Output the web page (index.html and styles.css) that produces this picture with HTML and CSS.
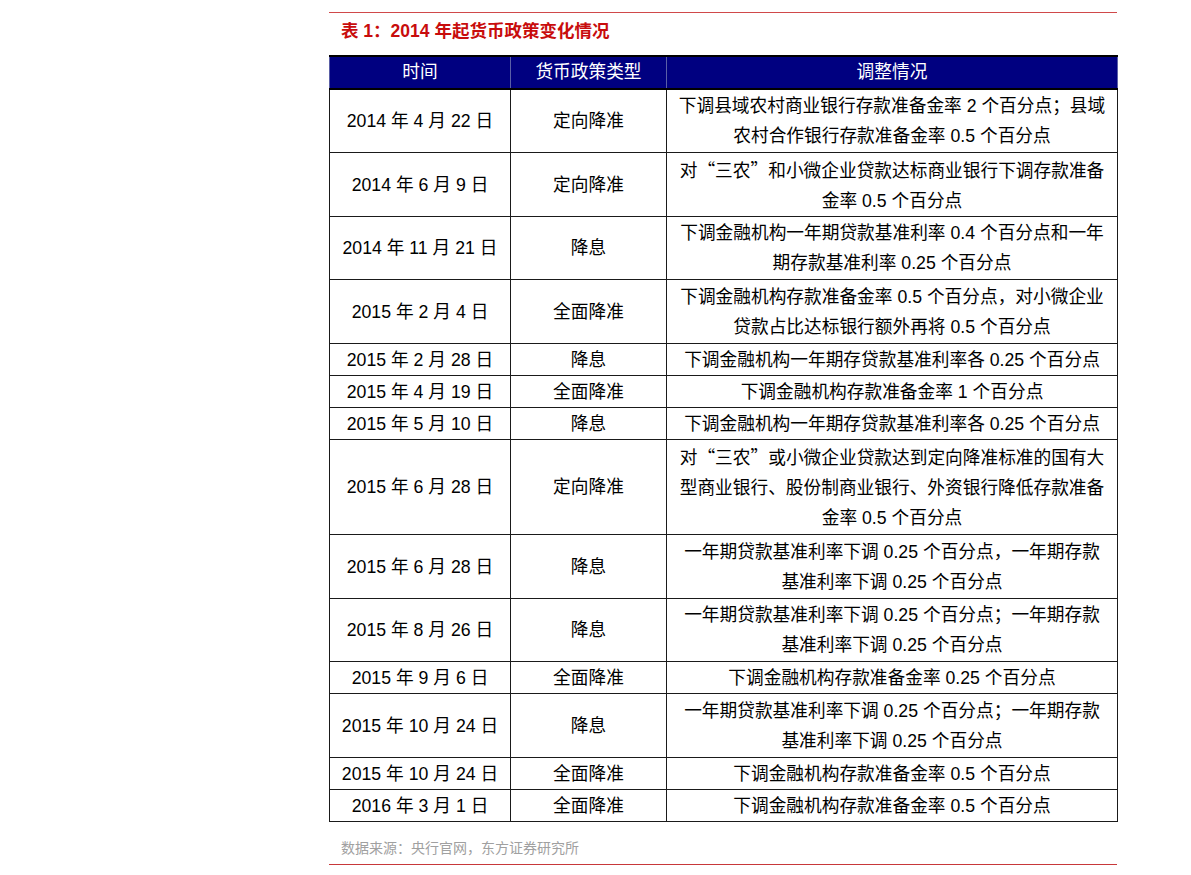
FILE: index.html
```html
<!DOCTYPE html>
<html lang="zh">
<head>
<meta charset="utf-8">
<link rel="stylesheet" href="styles.css">
</head>
<body>
<div class="page">
  <div class="rule-top"></div>
  <h1 class="title">表 1：2014 年起货币政策变化情况</h1>
  <table class="policy">
    <colgroup>
      <col class="c1"><col class="c2"><col class="c3">
    </colgroup>
    <thead>
      <tr><th>时间</th><th>货币政策类型</th><th>调整情况</th></tr>
    </thead>
    <tbody>
      <tr class="h2"><td>2014 年 4 月 22 日</td><td>定向降准</td><td>下调县域农村商业银行存款准备金率 2 个百分点；县域<br>农村合作银行存款准备金率 0.5 个百分点</td></tr>
      <tr class="h2b"><td>2014 年 6 月 9 日</td><td>定向降准</td><td>对<span class="q">“</span>三农<span class="q">”</span>和小微企业贷款达标商业银行下调存款准备<br>金率 0.5 个百分点</td></tr>
      <tr class="h2"><td>2014 年 11 月 21 日</td><td>降息</td><td>下调金融机构一年期贷款基准利率 0.4 个百分点和一年<br>期存款基准利率 0.25 个百分点</td></tr>
      <tr class="h2b"><td>2015 年 2 月 4 日</td><td>全面降准</td><td>下调金融机构存款准备金率 0.5 个百分点，对小微企业<br>贷款占比达标银行额外再将 0.5 个百分点</td></tr>
      <tr><td>2015 年 2 月 28 日</td><td>降息</td><td>下调金融机构一年期存贷款基准利率各 0.25 个百分点</td></tr>
      <tr><td>2015 年 4 月 19 日</td><td>全面降准</td><td>下调金融机构存款准备金率 1 个百分点</td></tr>
      <tr><td>2015 年 5 月 10 日</td><td>降息</td><td>下调金融机构一年期存贷款基准利率各 0.25 个百分点</td></tr>
      <tr class="h3"><td>2015 年 6 月 28 日</td><td>定向降准</td><td>对<span class="q">“</span>三农<span class="q">”</span>或小微企业贷款达到定向降准标准的国有大<br>型商业银行、股份制商业银行、外资银行降低存款准备<br>金率 0.5 个百分点</td></tr>
      <tr class="h2b"><td>2015 年 6 月 28 日</td><td>降息</td><td>一年期贷款基准利率下调 0.25 个百分点，一年期存款<br>基准利率下调 0.25 个百分点</td></tr>
      <tr class="h2"><td>2015 年 8 月 26 日</td><td>降息</td><td>一年期贷款基准利率下调 0.25 个百分点；一年期存款<br>基准利率下调 0.25 个百分点</td></tr>
      <tr><td>2015 年 9 月 6 日</td><td>全面降准</td><td>下调金融机构存款准备金率 0.25 个百分点</td></tr>
      <tr class="h2b"><td>2015 年 10 月 24 日</td><td>降息</td><td>一年期贷款基准利率下调 0.25 个百分点；一年期存款<br>基准利率下调 0.25 个百分点</td></tr>
      <tr><td>2015 年 10 月 24 日</td><td>全面降准</td><td>下调金融机构存款准备金率 0.5 个百分点</td></tr>
      <tr><td>2016 年 3 月 1 日</td><td>全面降准</td><td>下调金融机构存款准备金率 0.5 个百分点</td></tr>
    </tbody>
  </table>
  <p class="source">数据来源：央行官网，东方证券研究所</p>
  <div class="rule-bottom"></div>
</div>
</body>
</html>
```

FILE: styles.css
```css
html, body {
  margin: 0;
  padding: 0;
  background: #ffffff;
}

body {
  font-family: "Liberation Sans", "Noto Sans CJK SC", sans-serif;
  color: #000000;
}

.page {
  width: 788px;
  margin-left: 329px;
  padding-top: 12px;
}

.rule-top {
  height: 1px;
  background: #d0494a;
}

.title {
  margin: 0;
  padding: 7px 0 0 12px;
  height: 42px;
  box-sizing: border-box;
  font-size: 17.5px;
  line-height: 22px;
  font-weight: bold;
  color: #c80c0c;
}

.policy {
  width: 788px;
  border-collapse: collapse;
  table-layout: fixed;
  font-size: 17.7px;
}

.c1 { width: 181px; }
.c2 { width: 156px; }
.c3 { width: 451px; }

.policy th {
  background: #000080;
  color: #ffffff;
  font-weight: normal;
  height: 31px;
  line-height: 29px;
  padding: 0;
  text-align: center;
  border-top: 2px solid #000000;
  border-bottom: 2px solid #000000;
  border-left: 1px solid #5a5fa6;
  border-right: 1px solid #5a5fa6;
}

.policy td {
  border: 1px solid #1a1a1a;
  padding: 0;
  height: 31px;
  line-height: 30px;
  text-align: center;
  vertical-align: middle;
  white-space: nowrap;
}

.policy tr.h2 td {
  height: 62px;
}

.policy tr.h2b td {
  height: 63px;
}

.policy tr.h3 td {
  height: 94px;
}

.q {
  font-family: "Noto Sans CJK SC", sans-serif;
}

.source {
  margin: 0;
  padding: 16px 0 0 12px;
  height: 42px;
  box-sizing: border-box;
  font-size: 14px;
  line-height: 20px;
  color: #a0a0a0;
}

.rule-bottom {
  height: 1px;
  background: #c8383a;
  box-shadow: 0 1px 0 #f2c4c4;
}
```
